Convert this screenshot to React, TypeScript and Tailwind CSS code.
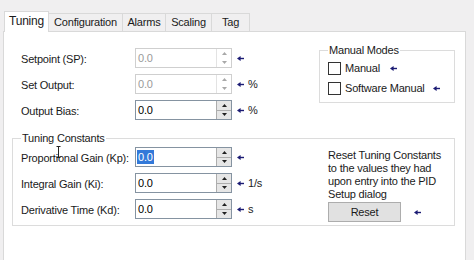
import React from 'react';

const font = { fontFamily: '"Liberation Sans", Arial, sans-serif' };

function Arrow() {
  return (
    <svg width="7" height="5" viewBox="0 0 7 5" className="shrink-0">
      <polygon points="0,2.5 3.6,0 3.6,5" fill="#1c1c74" />
      <rect x="3" y="1.8" width="4" height="1.4" fill="#1c1c74" />
    </svg>
  );
}

function Triangle({ up, color }: { up?: boolean; color: string }) {
  return (
    <svg width="5" height="3" viewBox="0 0 5 3">
      <polygon points={up ? '2.5,0 5,3 0,3' : '0,0 5,0 2.5,3'} fill={color} />
    </svg>
  );
}

function SpinInput({ disabled, selected }: { disabled?: boolean; selected?: boolean }) {
  return (
    <div
      className={
        'flex h-[20px] w-[97px] border bg-white ' +
        (disabled ? 'border-[#cfcfcf]' : 'border-[#8593a1]')
      }
    >
      <div className="flex flex-1 items-center pl-[1px]">
        {selected ? (
          <span className="bg-[#3379d9] px-[1px] leading-[14px] text-white">0.0</span>
        ) : (
          <span className={'px-[1px] ' + (disabled ? 'text-[#9a9a9a]' : 'text-black')}>0.0</span>
        )}
      </div>
      <div
        className={
          'flex w-[15px] flex-col border-l ' +
          (disabled ? 'border-[#e3e3e3] bg-white' : 'border-[#adadad] bg-[#e6e6e6]')
        }
      >
        <div
          className={
            'flex flex-1 items-center justify-center ' +
            (disabled ? '' : 'border-b border-[#adadad]')
          }
        >
          <Triangle up color={disabled ? '#a8a8a8' : '#202020'} />
        </div>
        <div className="flex flex-1 items-center justify-center">
          <Triangle color={disabled ? '#a8a8a8' : '#202020'} />
        </div>
      </div>
    </div>
  );
}

function Row({ label, disabled, selected, unit }: { label: string; disabled?: boolean; selected?: boolean; unit?: string }) {
  return (
    <div className="flex h-[20px] items-center">
      <div className="w-[114px] pt-[2px]">{label}</div>
      <SpinInput disabled={disabled} selected={selected} />
      <div className="ml-[5px]">
        <Arrow />
      </div>
      {unit && <span className="ml-[4px] text-[#222]">{unit}</span>}
    </div>
  );
}

function CheckRow({ label, gap }: { label: string; gap: string }) {
  return (
    <div className="flex h-[13px] items-center">
      <div className="h-[13px] w-[13px] border border-[#333] bg-white" />
      <span className="ml-[4px]">{label}</span>
      <div className={gap}>
        <Arrow />
      </div>
    </div>
  );
}

export default function App() {
  const tabs = [
    { name: 'Configuration', w: 'w-[74px]' },
    { name: 'Alarms', w: 'w-[43px]' },
    { name: 'Scaling', w: 'w-[46px]' },
    { name: 'Tag', w: 'w-[38px]' },
  ];

  return (
    <div
      className="relative h-[260px] w-[474px] overflow-hidden bg-[#f0eff0] text-[11px] tracking-[-0.2px] text-[#1a1a1a]"
      style={font}
    >
      {/* Tabs */}
      <div className="flex items-end pl-[4px] pt-[11px]">
        <div className="relative z-10 -mb-[1px] flex h-[21px] w-[45px] items-center justify-center border border-b-0 border-[#d9d9d9] bg-white text-[12px] pb-[2px]">
          Tuning
        </div>
        {tabs.map((t) => (
          <div
            key={t.name}
            className={
              'flex h-[18px] items-center justify-center border border-b-0 border-l-0 border-[#d9d9d9] bg-[#f0eff0] ' +
              t.w
            }
          >
            {t.name}
          </div>
        ))}
      </div>

      {/* Panel */}
      <div className="ml-[3px] h-[240px] w-[463px] border border-[#d9d9d9] bg-white">
        <div className="flex">
          <div className="ml-[17px] mt-[16px] flex w-[298px] flex-col gap-[6px]">
            <Row label="Setpoint (SP):" disabled />
            <Row label="Set Output:" disabled unit="%" />
            <Row label="Output Bias:" unit="%" />
          </div>
          <fieldset className="mt-[11px] h-[60px] w-[136px] border border-[#dcdcdc] pl-[8px]">
            <legend className="px-[1px] leading-[14px]">Manual Modes</legend>
            <div className="mt-[5px] flex flex-col gap-[7px]">
              <CheckRow label="Manual" gap="ml-[10px]" />
              <CheckRow label="Software Manual" gap="ml-[8px]" />
            </div>
          </fieldset>
        </div>

        <fieldset className="relative ml-[8px] mt-[11px] flex h-[95px] w-[443px] border border-[#dcdcdc] pl-[8px]">
          <legend className="px-[1px] leading-[14px]">Tuning Constants</legend>
          <div className="flex">
            <div className="mt-[2px] flex w-[307px] flex-col gap-[6px]">
              <Row label="Proportional Gain (Kp):" selected />
              <Row label="Integral Gain (Ki):" unit="1/s" />
              <Row label="Derivative Time (Kd):" unit="s" />
            </div>
            <div className="mt-[4px] flex flex-col">
              <div className="leading-[13px]">
                Reset Tuning Constants
                <br />
                to the values they had
                <br />
                upon entry into the PID
                <br />
                Setup dialog
              </div>
              <div className="mt-[1px] flex items-center">
                <div className="flex h-[20px] w-[73px] items-center justify-center border border-[#adadad] bg-[#e1e1e1]">
                  Reset
                </div>
                <div className="ml-[13px]">
                  <Arrow />
                </div>
              </div>
            </div>
          </div>
          {/* text cursor */}
          <svg width="5" height="12" viewBox="0 0 5 12" className="absolute left-[43px] top-[1px]">
            <path d="M0.5 0.5 H4.5 M2.5 0.5 V11.5 M0.5 11.5 H4.5" stroke="#222" strokeWidth="1" fill="none" />
          </svg>
        </fieldset>
      </div>
    </div>
  );
}
